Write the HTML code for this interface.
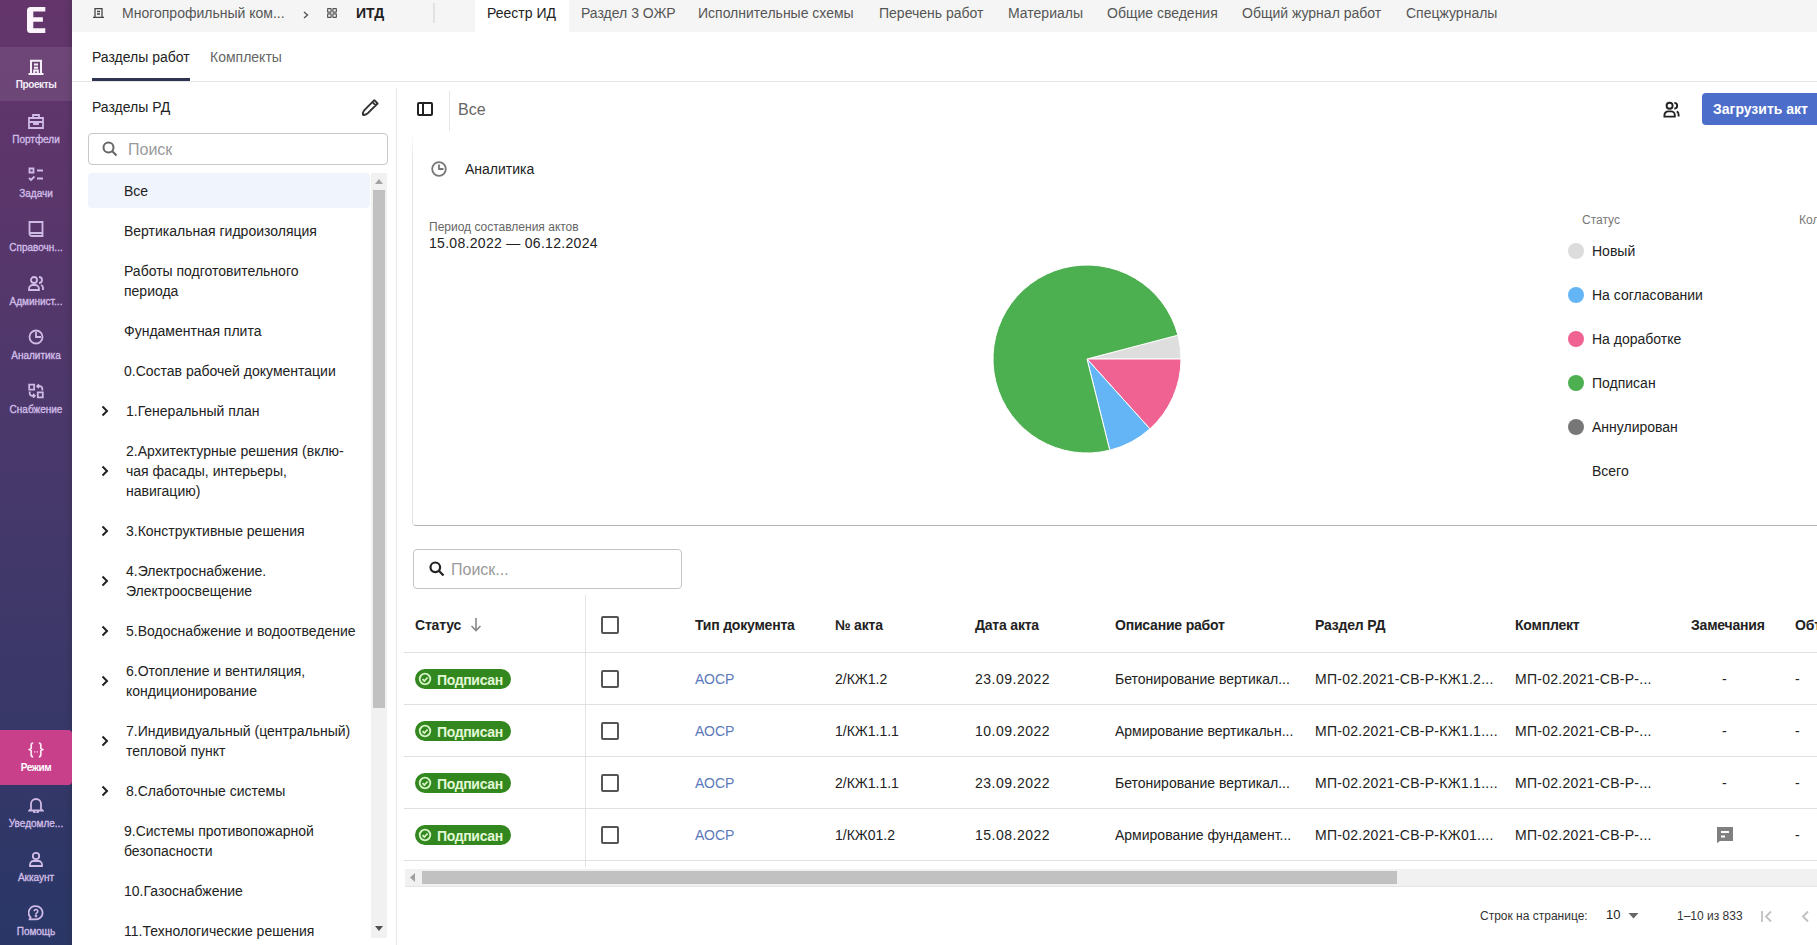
<!DOCTYPE html>
<html><head><meta charset="utf-8">
<style>
*{box-sizing:border-box;margin:0;padding:0}
html,body{width:1817px;height:945px;overflow:hidden;background:#fff}
body{position:relative;font-family:"Liberation Sans",sans-serif;color:#222;font-size:14px;line-height:20px}
.a{position:absolute;white-space:nowrap}
/* sidebar */
#sb{position:absolute;left:0;top:0;width:72px;height:945px;background:linear-gradient(180deg,rgb(99,53,107) 0px,rgb(98,53,107) 39px,rgb(90,54,107) 203px,rgb(74,56,107) 435px,rgb(60,56,105) 653px,rgb(44,55,103) 893px,rgb(42,55,102) 945px)}
.nav{position:absolute;left:0;width:72px;height:54px;color:#cfbbe6;font-size:10px;line-height:12px;text-align:center}
.nav svg{position:absolute;left:28px;top:12px;width:16px;height:16px}
.nav span{position:absolute;left:0;right:0;top:33px;-webkit-text-stroke:0.35px currentColor}
/* top bar */
#tb{position:absolute;left:72px;top:0;width:1745px;height:32px;background:#f5f5f5}
.tab{position:absolute;top:0;height:32px;color:#555;font-size:14px;line-height:20px;padding-top:3px}
</style></head>
<body>
<div id="sb">
  <div class="a" style="left:64px;top:0;width:8px;height:945px;background:linear-gradient(90deg,rgba(30,30,40,0) 0,rgba(30,30,40,0.08) 60%,rgba(30,30,40,0.2) 100%)"></div>
    <svg class="a" style="left:0;top:0" width="72" height="40" viewBox="0 0 72 40"><path d="M30.5 7H45.3V11.6H33.3V17.2H42.9V21.8H33.3V28.3H45.3V32.9H30.5Q27 32.9 27 29.4V10.5Q27 7 30.5 7Z" fill="#fbf4fb"/></svg>
  <div class="nav" style="top:47px;background:rgba(255,255,255,0.085);color:#f3ecf8">
    <svg viewBox="0 0 16 16" fill="none" stroke="#f6eefa" stroke-width="2"><path d="M3 15V1.8h10V15M0.5 15h15M6 5.4h4M6 8.8h4M6.2 14v-2.4h3.6V14"/></svg>
    <span style="font-weight:700;font-size:10px;letter-spacing:-0.4px;top:31.5px;-webkit-text-stroke:0">Проекты</span></div>
  <div class="nav" style="top:101px">
    <svg viewBox="0 0 16 16" fill="none" stroke="#cfbbe6" stroke-width="1.8"><path d="M1 5h14v10H1zM5 5V2h6v3M1 9h14M6 9v2h4V9"/></svg>
    <span>Портфели</span></div>
  <div class="nav" style="top:155px">
    <svg viewBox="0 0 16 16" fill="none" stroke="#cfbbe6" stroke-width="1.8"><path d="M1.5 1.5h4v4h-4zM9 3.5h6M1 11l2 2 3.5-3.5M9 11.5h6"/></svg>
    <span>Задачи</span></div>
  <div class="nav" style="top:209px">
    <svg viewBox="0 0 16 16" fill="none" stroke="#cfbbe6" stroke-width="1.8"><path d="M1.5 1h13v14H4a2.5 2.5 0 0 1-2.5-2.5zM1.5 12h13"/></svg>
    <span>Справочн...</span></div>
  <div class="nav" style="top:263px">
    <svg viewBox="0 0 16 16" fill="none" stroke="#cfbbe6" stroke-width="1.8"><circle cx="6" cy="5" r="3"/><path d="M1 15v-1a4 4 0 0 1 4-4h2a4 4 0 0 1 4 4v1zM11 2a3 3 0 0 1 0 6M13 10a3 3 0 0 1 2 3v2"/></svg>
    <span>Админист...</span></div>
  <div class="nav" style="top:317px">
    <svg viewBox="0 0 16 16" fill="none" stroke="#cfbbe6" stroke-width="1.8"><circle cx="8" cy="8" r="6.5"/><path d="M8 3v5h5"/></svg>
    <span>Аналитика</span></div>
  <div class="nav" style="top:371px">
    <svg viewBox="0 0 16 16" fill="none" stroke="#cfbbe6" stroke-width="1.8"><path d="M1.2 1.7h5v5h-5zM9.8 9.3h5v5h-5zM9.5 3.2h2.3a2.5 2.5 0 0 1 2.5 2.5V7.5M11 1.4L9.2 3.2 11 5M1.7 8.5v1.8a2.5 2.5 0 0 0 2.5 2.5h2.3M5 11l1.8 1.8L5 14.6"/></svg>
    <span>Снабжение</span></div>
  <div class="nav" style="top:730px;height:55px;background:#c8408a;color:#fff;border-radius:0 4px 4px 0">
    <svg viewBox="0 0 16 16" style="left:27px;width:18px" fill="none" stroke="#fde8f6" stroke-width="1.7"><path d="M5.2 1Q3.2 1 3.2 3V6.4L1.4 7.6L3.2 8.8V12.8Q3.2 14.8 5.2 14.8M10.8 1Q12.8 1 12.8 3V6.4L14.6 7.6L12.8 8.8V12.8Q12.8 14.8 10.8 14.8"/><rect x="6.2" y="9.3" width="1.2" height="1.2" fill="#fde8f6" stroke="none"/><rect x="8.7" y="9.3" width="1.2" height="1.2" fill="#fde8f6" stroke="none"/></svg>
    <span style="font-weight:700;font-size:10px;letter-spacing:-0.4px;top:32px;-webkit-text-stroke:0">Режим</span></div>
  <div class="nav" style="top:785px">
    <svg viewBox="0 0 16 16" fill="none" stroke="#cfbbe6" stroke-width="1.8"><path d="M3 12V7a5 5 0 0 1 10 0v5l1.5 1.5h-13zM6 14.5a2 2 0 0 0 4 0"/></svg>
    <span>Уведомле...</span></div>
  <div class="nav" style="top:839px">
    <svg viewBox="0 0 16 16" fill="none" stroke="#cfbbe6" stroke-width="1.8"><circle cx="8" cy="5" r="3.2"/><path d="M2 15v-1.5A3.5 3.5 0 0 1 5.5 10h5a3.5 3.5 0 0 1 3.5 3.5V15z"/></svg>
    <span>Аккаунт</span></div>
  <div class="nav" style="top:893px">
    <svg viewBox="0 0 16 16" fill="none" stroke="#cfbbe6" stroke-width="1.8"><path d="M8 1.2a6.6 6.6 0 1 1 0 13.2H1.6V14l1-1.6A6.6 6.6 0 0 1 8 1.2z"/><path d="M6.2 6.3a1.8 1.8 0 1 1 2.6 1.6c-.6.3-.8.6-.8 1.3" stroke-width="1.6"/><circle cx="8" cy="11" r=".5" fill="#cfbbe6"/></svg>
    <span>Помощь</span></div>
</div>


<div id="tb">
  <svg class="a" style="left:21px;top:8px" width="11" height="10" viewBox="0 0 11 10" fill="none" stroke="#444" stroke-width="1.3"><path d="M2 9.5V.7h7v8.8M0 9.4h11M4 3.5h3M4 6h3"/></svg>
  <div class="a" style="left:50px;top:3px;color:#555">Многопрофильный ком...</div>
  <svg class="a" style="left:231px;top:11px" width="6" height="8" viewBox="0 0 6 8" fill="none" stroke="#555" stroke-width="1.4"><path d="M1 1l3.5 3L1 7"/></svg>
  <svg class="a" style="left:255px;top:8px" width="10" height="10" viewBox="0 0 11 11" fill="none" stroke="#555" stroke-width="1.3"><rect x=".7" y=".7" width="3.8" height="3.8" rx=".5"/><rect x="6.5" y=".7" width="3.8" height="3.8" rx=".5"/><rect x=".7" y="6.5" width="3.8" height="3.8" rx=".5"/><rect x="6.5" y="6.5" width="3.8" height="3.8" rx=".5"/></svg>
  <div class="a" style="left:284px;top:3px;color:#222;font-weight:700">ИТД</div>
  <div class="a" style="left:361px;top:3px;width:2px;height:20px;background:#e2e2e2"></div>
  <div class="a" style="left:403px;top:0;width:94px;height:32px;background:#fff"></div>
  <div class="a" style="left:415px;top:3px;color:#222">Реестр ИД</div>
  <div class="a" style="left:509px;top:3px;color:#555">Раздел 3 ОЖР</div>
  <div class="a" style="left:626px;top:3px;color:#555">Исполнительные схемы</div>
  <div class="a" style="left:807px;top:3px;color:#555">Перечень работ</div>
  <div class="a" style="left:936px;top:3px;color:#555">Материалы</div>
  <div class="a" style="left:1035px;top:3px;color:#555">Общие сведения</div>
  <div class="a" style="left:1170px;top:3px;color:#555">Общий журнал работ</div>
  <div class="a" style="left:1334px;top:3px;color:#555">Спецжурналы</div>
</div>
<!-- sub tabs -->
<div class="a" style="left:92px;top:47px;color:#222">Разделы работ</div>
<div class="a" style="left:210px;top:47px;color:#666">Комплекты</div>
<div class="a" style="left:92px;top:78px;width:98px;height:3px;background:#2d3350"></div>
<div class="a" style="left:72px;top:81px;width:1745px;height:1px;background:#e6e6e6"></div>


<!-- left panel -->
<div class="a" style="left:92px;top:97px;color:#222">Разделы РД</div>
<svg class="a" style="left:355px;top:92px" width="30" height="28" viewBox="0 0 30 28" fill="none" stroke="#333" stroke-width="1.9" stroke-linejoin="round"><path d="M19.3 8.2L22.6 11.5L12.4 21.6Q10 23.4 8 22.8Q7.4 20.8 9.2 18.3Z M17.4 10.1L20.7 13.4"/></svg>
<div class="a" style="left:88px;top:133px;width:300px;height:32px;border:1px solid #c8c8c8;border-radius:4px"></div>
<svg class="a" style="left:102px;top:141px" width="16" height="16" viewBox="0 0 16 16" fill="none" stroke="#666" stroke-width="2"><circle cx="6.5" cy="6.5" r="5"/><path d="M10.3 10.3L14.5 14.5"/></svg>
<div class="a" style="left:128px;top:140px;color:#9a9a9a;font-size:16px">Поиск</div>
<div class="a" style="left:88px;top:173px;width:282px;height:35px;background:#f0f4fc;border-radius:4px"></div>
<div class="a" style="left:124px;top:181px;color:#222">Все</div>
<div class="a" style="left:124px;top:221px;color:#222">Вертикальная гидроизоляция</div>
<div class="a" style="left:124px;top:261px;color:#222">Работы подготовительного</div>
<div class="a" style="left:124px;top:281px;color:#222">периода</div>
<div class="a" style="left:124px;top:321px;color:#222">Фундаментная плита</div>
<div class="a" style="left:124px;top:361px;color:#222">0.Состав рабочей документации</div>
<div class="a" style="left:126px;top:401px;color:#222">1.Генеральный план</div>
<svg class="a" style="left:100px;top:405px" width="10" height="12" viewBox="0 0 10 12" fill="none" stroke="#222" stroke-width="2"><path d="M2.5 1.5l4.5 4.5-4.5 4.5"/></svg>
<div class="a" style="left:126px;top:441px;color:#222">2.Архитектурные решения (вклю-</div>
<div class="a" style="left:126px;top:461px;color:#222">чая фасады, интерьеры,</div>
<div class="a" style="left:126px;top:481px;color:#222">навигацию)</div>
<svg class="a" style="left:100px;top:465px" width="10" height="12" viewBox="0 0 10 12" fill="none" stroke="#222" stroke-width="2"><path d="M2.5 1.5l4.5 4.5-4.5 4.5"/></svg>
<div class="a" style="left:126px;top:521px;color:#222">3.Конструктивные решения</div>
<svg class="a" style="left:100px;top:525px" width="10" height="12" viewBox="0 0 10 12" fill="none" stroke="#222" stroke-width="2"><path d="M2.5 1.5l4.5 4.5-4.5 4.5"/></svg>
<div class="a" style="left:126px;top:561px;color:#222">4.Электроснабжение.</div>
<div class="a" style="left:126px;top:581px;color:#222">Электроосвещение</div>
<svg class="a" style="left:100px;top:575px" width="10" height="12" viewBox="0 0 10 12" fill="none" stroke="#222" stroke-width="2"><path d="M2.5 1.5l4.5 4.5-4.5 4.5"/></svg>
<div class="a" style="left:126px;top:621px;color:#222">5.Водоснабжение и водоотведение</div>
<svg class="a" style="left:100px;top:625px" width="10" height="12" viewBox="0 0 10 12" fill="none" stroke="#222" stroke-width="2"><path d="M2.5 1.5l4.5 4.5-4.5 4.5"/></svg>
<div class="a" style="left:126px;top:661px;color:#222">6.Отопление и вентиляция,</div>
<div class="a" style="left:126px;top:681px;color:#222">кондиционирование</div>
<svg class="a" style="left:100px;top:675px" width="10" height="12" viewBox="0 0 10 12" fill="none" stroke="#222" stroke-width="2"><path d="M2.5 1.5l4.5 4.5-4.5 4.5"/></svg>
<div class="a" style="left:126px;top:721px;color:#222">7.Индивидуальный (центральный)</div>
<div class="a" style="left:126px;top:741px;color:#222">тепловой пункт</div>
<svg class="a" style="left:100px;top:735px" width="10" height="12" viewBox="0 0 10 12" fill="none" stroke="#222" stroke-width="2"><path d="M2.5 1.5l4.5 4.5-4.5 4.5"/></svg>
<div class="a" style="left:126px;top:781px;color:#222">8.Слаботочные системы</div>
<svg class="a" style="left:100px;top:785px" width="10" height="12" viewBox="0 0 10 12" fill="none" stroke="#222" stroke-width="2"><path d="M2.5 1.5l4.5 4.5-4.5 4.5"/></svg>
<div class="a" style="left:124px;top:821px;color:#222">9.Системы противопожарной</div>
<div class="a" style="left:124px;top:841px;color:#222">безопасности</div>
<div class="a" style="left:124px;top:881px;color:#222">10.Газоснабжение</div>
<div class="a" style="left:124px;top:921px;color:#222">11.Технологические решения</div>
<div class="a" style="left:371px;top:173px;width:16px;height:765px;background:#f1f1f1"></div>
<svg class="a" style="left:375px;top:179px" width="8" height="5" viewBox="0 0 8 5"><path d="M0 5L4 0L8 5z" fill="#a3a3a3"/></svg>
<div class="a" style="left:373px;top:190px;width:12px;height:518px;background:#c1c1c1"></div>
<svg class="a" style="left:375px;top:926px" width="8" height="5" viewBox="0 0 8 5"><path d="M0 0L4 5L8 0z" fill="#505050"/></svg>
<div class="a" style="left:396px;top:88px;width:1px;height:857px;background:#e8e8e8"></div>


<!-- toolbar -->
<svg class="a" style="left:417px;top:102px" width="16" height="14" viewBox="0 0 16 14" fill="none" stroke="#222" stroke-width="2"><rect x="1" y="1" width="14" height="12" rx="1"/><path d="M6 1v12"/></svg>
<div class="a" style="left:449px;top:91px;width:1px;height:40px;background:#e6e6e6"></div>
<div class="a" style="left:458px;top:100px;color:#666;font-size:16px">Все</div>
<svg class="a" style="left:1663px;top:100.5px" width="17" height="17" viewBox="0 0 18 18" fill="none" stroke="#222" stroke-width="2"><circle cx="7" cy="5" r="3.2"/><path d="M1.5 16.5v-1.5a4 4 0 0 1 4-4h3a4 4 0 0 1 4 4v1.5zM12 2a3 3 0 0 1 0 6M14.5 11a3.5 3.5 0 0 1 2 3.2v2.3"/></svg>
<div class="a" style="left:1702px;top:93px;width:130px;height:32px;background:#4d6dca;border-radius:4px"></div>
<div class="a" style="left:1713px;top:99px;color:#fff;font-weight:700">Загрузить акт</div>
<!-- analytics card -->
<div class="a" style="left:412px;top:120px;width:1420px;height:406px;border-left:1px solid #e4e4e4;border-bottom:1px solid #b4b4b4;border-bottom-left-radius:4px;box-shadow:0 1px 2px rgba(0,0,0,0.08);-webkit-mask-image:linear-gradient(180deg,transparent 0,transparent 14px,#000 40px)"></div>
<svg class="a" style="left:431px;top:161px" width="16" height="16" viewBox="0 0 16 16" fill="none" stroke="#777" stroke-width="1.8"><circle cx="8" cy="8" r="6.8"/><path d="M8 3.5V8h4.5"/></svg>
<div class="a" style="left:465px;top:159px;color:#222">Аналитика</div>
<div class="a" style="left:429px;top:219px;color:#666;font-size:12px;line-height:16px">Период составления актов</div>
<div class="a" style="left:429px;top:233px;color:#222;font-size:14px;letter-spacing:0.3px">15.08.2022 — 06.12.2024</div>
<svg class="a" style="left:0;top:0" width="1817" height="945"><path d="M1087 359L1177.92 335.15A94 94 0 0 1 1181.00 359.00Z" fill="#dedede" stroke="#fff" stroke-width="1"/><path d="M1087 359L1181.00 359.00A94 94 0 0 1 1149.90 428.86Z" fill="#f06292" stroke="#fff" stroke-width="1"/><path d="M1087 359L1149.90 428.86A94 94 0 0 1 1109.74 450.21Z" fill="#64b5f6" stroke="#fff" stroke-width="1"/><path d="M1087 359L1109.74 450.21A94 94 0 1 1 1177.92 335.15Z" fill="#4caf50" stroke="#fff" stroke-width="1"/></svg>
<div class="a" style="left:1582px;top:212px;color:#777;font-size:12px;line-height:16px">Статус</div>
<div class="a" style="left:1799px;top:212px;color:#777;font-size:12px;line-height:16px">Кол</div>
<div class="a" style="left:1568px;top:243px;width:16px;height:16px;border-radius:50%;background:#dcdcdc"></div>
<div class="a" style="left:1592px;top:241px;color:#222">Новый</div>
<div class="a" style="left:1568px;top:287px;width:16px;height:16px;border-radius:50%;background:#64b5f6"></div>
<div class="a" style="left:1592px;top:285px;color:#222">На согласовании</div>
<div class="a" style="left:1568px;top:331px;width:16px;height:16px;border-radius:50%;background:#f06292"></div>
<div class="a" style="left:1592px;top:329px;color:#222">На доработке</div>
<div class="a" style="left:1568px;top:375px;width:16px;height:16px;border-radius:50%;background:#4caf50"></div>
<div class="a" style="left:1592px;top:373px;color:#222">Подписан</div>
<div class="a" style="left:1568px;top:419px;width:16px;height:16px;border-radius:50%;background:#777"></div>
<div class="a" style="left:1592px;top:417px;color:#222">Аннулирован</div>
<div class="a" style="left:1592px;top:461px;color:#222">Всего</div>


<!-- table search -->
<div class="a" style="left:413px;top:549px;width:269px;height:40px;border:1px solid #c4c4c4;border-radius:4px"></div>
<svg class="a" style="left:429px;top:561px" width="16" height="16" viewBox="0 0 16 16" fill="none" stroke="#222" stroke-width="2.2"><circle cx="6.3" cy="6.3" r="4.8"/><path d="M9.8 9.8L14.5 14.5"/></svg>
<div class="a" style="left:451px;top:560px;color:#9a9a9a;font-size:16px">Поиск...</div>
<!-- table header -->
<div class="a" style="left:585px;top:595px;width:1px;height:272px;background:#e4e4e4"></div>
<div class="a" style="left:415px;top:615px;font-weight:700;color:#222;letter-spacing:-0.2px">Статус</div>
<svg class="a" style="left:470px;top:617px" width="12" height="15" viewBox="0 0 12 15" fill="none" stroke="#888" stroke-width="1.6"><path d="M6 1v12.5M1.5 9L6 13.5 10.5 9"/></svg>
<div class="a" style="left:601px;top:616px;width:18px;height:18px;border:2px solid #555;border-radius:2px"></div>
<div class="a" style="left:695px;top:615px;font-weight:700;color:#222;letter-spacing:-0.2px">Тип документа</div>
<div class="a" style="left:835px;top:615px;font-weight:700;color:#222;letter-spacing:-0.2px">№ акта</div>
<div class="a" style="left:975px;top:615px;font-weight:700;color:#222;letter-spacing:-0.2px">Дата акта</div>
<div class="a" style="left:1115px;top:615px;font-weight:700;color:#222;letter-spacing:-0.2px">Описание работ</div>
<div class="a" style="left:1315px;top:615px;font-weight:700;color:#222;letter-spacing:-0.2px">Раздел РД</div>
<div class="a" style="left:1515px;top:615px;font-weight:700;color:#222;letter-spacing:-0.2px">Комплект</div>
<div class="a" style="left:1691px;top:615px;font-weight:700;color:#222;letter-spacing:-0.2px">Замечания</div>
<div class="a" style="left:1795px;top:615px;font-weight:700;color:#222;letter-spacing:-0.2px">Обт</div>
<div class="a" style="left:404px;top:652px;width:1413px;height:1px;background:#e0e0e0"></div>
<div class="a" style="left:415px;top:669px;width:96px;height:20px;border-radius:10px;background:#32871e"></div>
<svg class="a" style="left:418px;top:672px" width="14" height="14" viewBox="0 0 14 14" fill="none" stroke="#d6f5c6" stroke-width="1.8"><circle cx="7" cy="7" r="5.3"/><path d="M4.5 7.2l1.8 1.8 3.3-3.5"/></svg>
<div class="a" style="left:437px;top:670px;color:#e3f8d6;font-weight:700;font-size:14px;letter-spacing:-0.35px">Подписан</div>
<div class="a" style="left:601px;top:670px;width:18px;height:18px;border:2px solid #555;border-radius:2px"></div>
<div class="a" style="left:695px;top:669px;color:#5b78b8">АОСР</div>
<div class="a" style="left:835px;top:669px">2/КЖ1.2</div>
<div class="a" style="left:975px;top:669px;letter-spacing:0.5px">23.09.2022</div>
<div class="a" style="left:1115px;top:669px">Бетонирование вертикал...</div>
<div class="a" style="left:1315px;top:669px;letter-spacing:0.28px">МП-02.2021-СВ-Р-КЖ1.2...</div>
<div class="a" style="left:1515px;top:669px;letter-spacing:0.28px">МП-02.2021-СВ-Р-...</div>
<div class="a" style="left:1722px;top:669px">-</div>
<div class="a" style="left:1795px;top:669px">-</div>
<div class="a" style="left:404px;top:704px;width:1413px;height:1px;background:#e0e0e0"></div>
<div class="a" style="left:415px;top:721px;width:96px;height:20px;border-radius:10px;background:#32871e"></div>
<svg class="a" style="left:418px;top:724px" width="14" height="14" viewBox="0 0 14 14" fill="none" stroke="#d6f5c6" stroke-width="1.8"><circle cx="7" cy="7" r="5.3"/><path d="M4.5 7.2l1.8 1.8 3.3-3.5"/></svg>
<div class="a" style="left:437px;top:722px;color:#e3f8d6;font-weight:700;font-size:14px;letter-spacing:-0.35px">Подписан</div>
<div class="a" style="left:601px;top:722px;width:18px;height:18px;border:2px solid #555;border-radius:2px"></div>
<div class="a" style="left:695px;top:721px;color:#5b78b8">АОСР</div>
<div class="a" style="left:835px;top:721px">1/КЖ1.1.1</div>
<div class="a" style="left:975px;top:721px;letter-spacing:0.5px">10.09.2022</div>
<div class="a" style="left:1115px;top:721px">Армирование вертикальн...</div>
<div class="a" style="left:1315px;top:721px;letter-spacing:0.28px">МП-02.2021-СВ-Р-КЖ1.1....</div>
<div class="a" style="left:1515px;top:721px;letter-spacing:0.28px">МП-02.2021-СВ-Р-...</div>
<div class="a" style="left:1722px;top:721px">-</div>
<div class="a" style="left:1795px;top:721px">-</div>
<div class="a" style="left:404px;top:756px;width:1413px;height:1px;background:#e0e0e0"></div>
<div class="a" style="left:415px;top:773px;width:96px;height:20px;border-radius:10px;background:#32871e"></div>
<svg class="a" style="left:418px;top:776px" width="14" height="14" viewBox="0 0 14 14" fill="none" stroke="#d6f5c6" stroke-width="1.8"><circle cx="7" cy="7" r="5.3"/><path d="M4.5 7.2l1.8 1.8 3.3-3.5"/></svg>
<div class="a" style="left:437px;top:774px;color:#e3f8d6;font-weight:700;font-size:14px;letter-spacing:-0.35px">Подписан</div>
<div class="a" style="left:601px;top:774px;width:18px;height:18px;border:2px solid #555;border-radius:2px"></div>
<div class="a" style="left:695px;top:773px;color:#5b78b8">АОСР</div>
<div class="a" style="left:835px;top:773px">2/КЖ1.1.1</div>
<div class="a" style="left:975px;top:773px;letter-spacing:0.5px">23.09.2022</div>
<div class="a" style="left:1115px;top:773px">Бетонирование вертикал...</div>
<div class="a" style="left:1315px;top:773px;letter-spacing:0.28px">МП-02.2021-СВ-Р-КЖ1.1....</div>
<div class="a" style="left:1515px;top:773px;letter-spacing:0.28px">МП-02.2021-СВ-Р-...</div>
<div class="a" style="left:1722px;top:773px">-</div>
<div class="a" style="left:1795px;top:773px">-</div>
<div class="a" style="left:404px;top:808px;width:1413px;height:1px;background:#e0e0e0"></div>
<div class="a" style="left:415px;top:825px;width:96px;height:20px;border-radius:10px;background:#32871e"></div>
<svg class="a" style="left:418px;top:828px" width="14" height="14" viewBox="0 0 14 14" fill="none" stroke="#d6f5c6" stroke-width="1.8"><circle cx="7" cy="7" r="5.3"/><path d="M4.5 7.2l1.8 1.8 3.3-3.5"/></svg>
<div class="a" style="left:437px;top:826px;color:#e3f8d6;font-weight:700;font-size:14px;letter-spacing:-0.35px">Подписан</div>
<div class="a" style="left:601px;top:826px;width:18px;height:18px;border:2px solid #555;border-radius:2px"></div>
<div class="a" style="left:695px;top:825px;color:#5b78b8">АОСР</div>
<div class="a" style="left:835px;top:825px">1/КЖ01.2</div>
<div class="a" style="left:975px;top:825px;letter-spacing:0.5px">15.08.2022</div>
<div class="a" style="left:1115px;top:825px">Армирование фундамент...</div>
<div class="a" style="left:1315px;top:825px;letter-spacing:0.28px">МП-02.2021-СВ-Р-КЖ01....</div>
<div class="a" style="left:1515px;top:825px;letter-spacing:0.28px">МП-02.2021-СВ-Р-...</div>
<svg class="a" style="left:1717px;top:827px" width="16" height="16" viewBox="0 0 16 16"><path d="M0 0h16v14H3l-3 2.2z" fill="#808080"/><path d="M4 5h8M4 9.5h4" stroke="#fff" stroke-width="2"/></svg>
<div class="a" style="left:1795px;top:825px">-</div>
<div class="a" style="left:404px;top:860px;width:1413px;height:1px;background:#e0e0e0"></div>

<!-- h scrollbar -->
<div class="a" style="left:405px;top:869px;width:1412px;height:18px;background:#f1f1f1;border-bottom:1px solid #e4e4e4"></div>
<svg class="a" style="left:410px;top:873px" width="6" height="9" viewBox="0 0 6 9"><path d="M5 0L0 4.5L5 9z" fill="#a0a0a0"/></svg>
<div class="a" style="left:422px;top:871px;width:975px;height:13px;background:#c1c1c1"></div>
<!-- pagination -->
<div class="a" style="left:1480px;top:908px;color:#333;font-size:12px;line-height:16px">Строк на странице:</div>
<div class="a" style="left:1606px;top:906px;color:#222;font-size:13px;line-height:18px">10</div>
<svg class="a" style="left:1628px;top:913px" width="11" height="6" viewBox="0 0 11 6"><path d="M.5 0L5.5 5.5L10.5 0z" fill="#666"/></svg>
<div class="a" style="left:1677px;top:908px;color:#333;font-size:12px;line-height:16px">1–10 из 833</div>
<svg class="a" style="left:1760px;top:910px" width="14" height="13" viewBox="0 0 14 13" fill="none" stroke="#c0c0c0" stroke-width="1.8"><path d="M2 1v11M11 1.5L6 6.5l5 5"/></svg>
<svg class="a" style="left:1800px;top:910px" width="10" height="13" viewBox="0 0 10 13" fill="none" stroke="#c0c0c0" stroke-width="1.8"><path d="M8 1.5L3 6.5l5 5"/></svg>

</body></html>
